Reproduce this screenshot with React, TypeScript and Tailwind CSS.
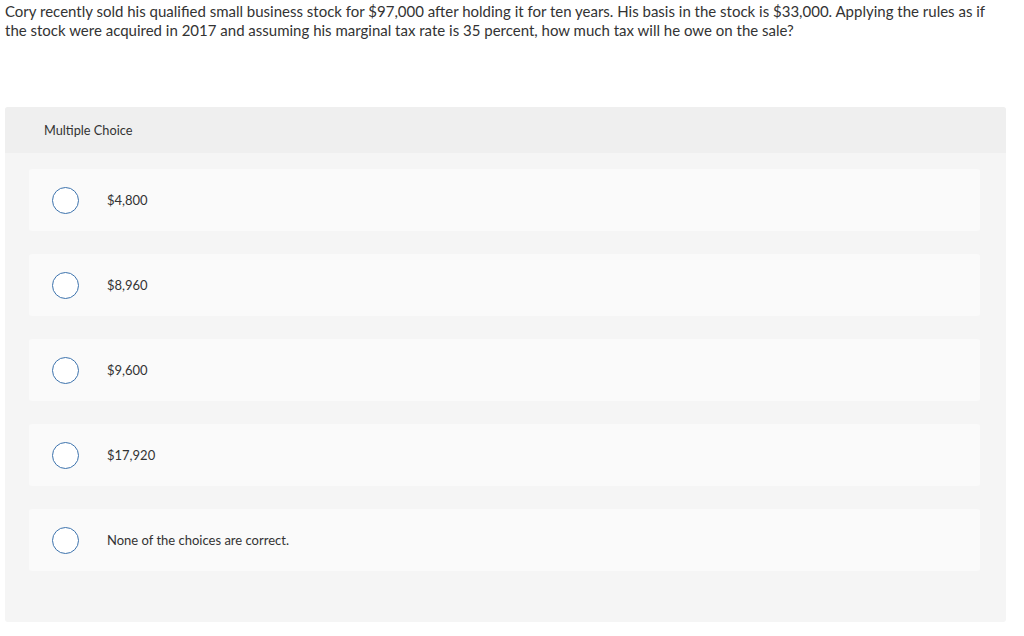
const choices = ['$4,800', '$8,960', '$9,600', '$17,920', 'None of the choices are correct.'];

export default function App() {
  return (
    <div className="min-h-[636px] bg-white text-[#333] font-['Lato','Open_Sans',sans-serif]">
      <p className="px-[5px] pt-[2px] text-[15px] leading-[19px] text-[#333] w-[1000px]">
        Cory recently sold his qualified small business stock for $97,000 after holding it for ten years. His basis in the stock is $33,000. Applying the rules as if the stock were acquired in 2017 and assuming his marginal tax rate is 35 percent, how much tax will he owe on the sale?
      </p>

      <div className="mx-[5px] mt-[67px] w-[1001px] rounded-[3px] bg-[#f5f5f5] pb-[51px]">
        <div className="flex h-[46px] items-center rounded-t-[3px] bg-[#efefef] pl-[39px] pt-[1px] text-[12.75px] text-[#333]">
          Multiple Choice
        </div>
        <div className="flex flex-col gap-[23px] pl-[24px] pr-[26px] pt-[16px]">
          {choices.map((c) => (
            <label key={c} className="flex h-[62px] cursor-pointer items-center rounded-[3px] bg-[#fafafa]">
              <span className="ml-[23px] h-[27px] w-[27px] rounded-full border-[1.5px] border-[#3d73ad] bg-white" />
              <span className="ml-[28px] pt-[1px] text-[13px] text-[#333]">{c}</span>
            </label>
          ))}
        </div>
      </div>
    </div>
  );
}
